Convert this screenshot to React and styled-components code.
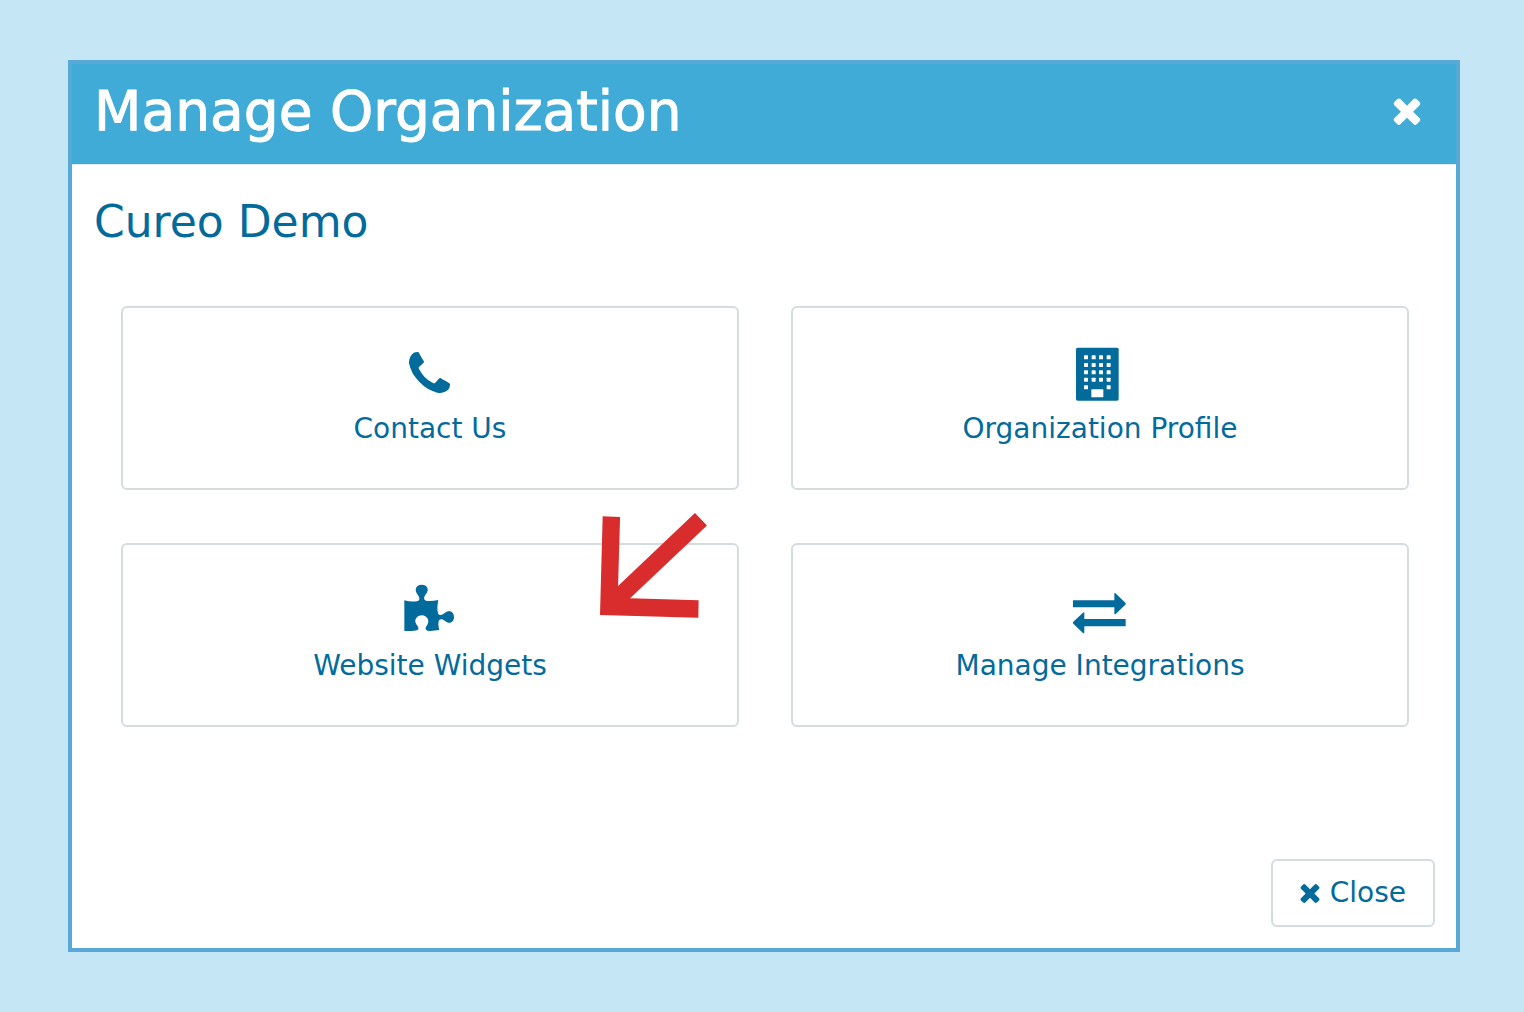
import React from "react";
import styled, { createGlobalStyle } from "styled-components";

const color = {
  page: "#c5e6f5",
  header: "#40abd6",
  frame: "#58a9d8",
  ink: "#036b9c",
  line: "#d3dce1",
  mark: "#d92c2c",
};

const GlobalStyle = createGlobalStyle`
  *, *::before, *::after { box-sizing: border-box; }
  body {
    margin: 0;
    background: ${color.page};
    color: ${color.ink};
    font-family: "DejaVu Sans", Verdana, sans-serif;
  }
  button { font: inherit; color: inherit; cursor: pointer; }
`;

const Page = styled.main`
  padding: 60px 64px 60px 68px;
`;

const Dialog = styled.section`
  border: 4px solid ${color.frame};
  background: #fff;
`;

const Header = styled.header`
  display: flex;
  align-items: center;
  justify-content: space-between;
  padding: 13px 35px 19px 22px;
  border-bottom: 1px solid #e3eaee;
  background: ${color.header};
  color: #fff;
`;

const Title = styled.h1`
  margin: 0;
  font-size: 55px;
  line-height: 68px;
  font-weight: 400;
  -webkit-text-stroke: 1px currentColor;
`;

const IconButton = styled.button`
  display: flex;
  padding: 0;
  border: 0;
  background: none;
`;

const Body = styled.div`
  padding: 27px 22px 0;
`;

const Subtitle = styled.h2`
  margin: 0;
  font-size: 44px;
  line-height: 60px;
  font-weight: 400;
`;

const Grid = styled.div`
  display: grid;
  grid-template-columns: 1fr 1fr;
  gap: 53px 52px;
  padding: 54px 25px 0 27px;
`;

const Card = styled.button`
  position: relative;
  display: flex;
  flex-direction: column;
  align-items: center;
  gap: 11px;
  padding: 39px 16px 42px;
  border: 2px solid ${color.line};
  border-radius: 6px;
  background: #fff;
  font-size: 28px;
  line-height: 34px;
`;

const Glyph = styled.svg`
  display: block;
  width: ${(p) => p.$size}px;
  height: ${(p) => p.$size}px;
  fill: currentColor;
`;

const Pointer = styled.svg`
  position: absolute;
  top: -32px;
  right: 30px;
  width: 107px;
  height: 105px;
  fill: ${color.mark};
  pointer-events: none;
`;

const Footer = styled.footer`
  display: flex;
  justify-content: flex-end;
  padding: 132px 21px 21px;
`;

const CloseButton = styled.button`
  display: flex;
  align-items: center;
  gap: 10px;
  padding: 15px 27px;
  border: 2px solid ${color.line};
  border-radius: 6px;
  background: #fff;
  font-size: 28px;
  line-height: 34px;
`;

const TimesIcon = ({ size }) => (
  <Glyph $size={size} viewBox="302 302 1188 1252" aria-hidden="true">
    <path d="M1490 1322q0 40-28 68l-136 136q-28 28-68 28t-68-28l-294-294-294 294q-28 28-68 28t-68-28l-136-136q-28-28-28-68t28-68l294-294-294-294q-28-28-28-68t28-68l136-136q28-28 68-28t68 28l294 294 294-294q28-28 68-28t68 28l136 136q28 28 28 68t-28 68l-294 294 294 294q28 28 28 68z" />
  </Glyph>
);

const PhoneIcon = () => (
  <Glyph $size={54} viewBox="-14 -44 1854 1854" aria-hidden="true">
    <path d="M1600 1240q0 27-10 70.500t-21 68.500q-21 50-122 106-94 51-186 51-27 0-53-3.500t-57.500-12.500-47-14.500-55.500-20.500-49-18q-98-35-175-83-127-79-264-216t-216-264q-48-77-83-175-3-9-18-49t-20.500-55.500-14.500-47-12.500-57.500-3.500-53q0-92 51-186 56-101 106-122 25-11 68.500-21t70.500-10q14 0 21 3 18 6 53 76 11 19 30 54t35 63.500 31 53.500q3 4 17.500 25t21.500 35.500 7 28.500q0 20-28.500 50t-62 55-62 53-28.500 46q0 9 5 22.500t8.500 20.500 14 24 11.500 19q76 137 174 235t235 174q2 1 19 11.500t24 14 20.500 8.500 22.500 5q18 0 46-28.500t53-62 55-62 50-28.500q14 0 28.500 7t35.500 21.500 25 17.500q25 15 53.500 31t63.500 35 54 30q70 35 76 53 3 7 3 21z" />
  </Glyph>
);

const windows = [67, 90, 112, 134, 157].flatMap((y, row) =>
  (row === 4 ? [78, 146] : [78, 101, 123, 146]).map((x) => [x, y])
);

const BuildingIcon = () => (
  <Glyph $size={54} viewBox="39 36 162 162" aria-hidden="true">
    <rect x="48" y="38" width="128" height="159" rx="5" />
    <g fill="#fff">
      {windows.map(([x, y]) => (
        <rect key={`${x}-${y}`} x={x - 6} y={y - 6} width="12" height="12" rx="2" />
      ))}
      <rect x="94" y="163" width="36" height="24" rx="2" />
    </g>
  </Glyph>
);

const PuzzleIcon = () => (
  <Glyph $size={54} viewBox="39 27 162 162" aria-hidden="true">
    <path d="M43 76C57 80 72 81 83 78C91 75 89 67 83 59C71 43 79 29 95 29C112 29 119 44 108 57C101 66 100 74 108 77C119 79 132 77 145 75C142 90 141 104 144 114C147 123 156 121 164 114C176 104 192 109 192 126C192 142 178 149 165 138C157 131 148 131 146 139C144 148 146 157 148 165C137 166 124 169 113 167C104 164 106 157 112 149C120 137 111 121 96 121C80 121 71 135 79 148C85 156 89 162 81 166C71 169 57 167 43 168Z" />
  </Glyph>
);

const ExchangeIcon = () => (
  <Glyph $size={54} viewBox="39 12 162 162" aria-hidden="true">
    <path d="M39 61H163V42Q163 36 168 41L196 68Q199 71 196 74L168 101Q163 106 163 99V82H39Z" />
    <path d="M197 117H73V100Q73 94 68 99L40 125Q37 128 40 131L68 158Q73 163 73 156V139H197Z" />
  </Glyph>
);

const actions = [
  { label: "Contact Us", Icon: PhoneIcon },
  { label: "Organization Profile", Icon: BuildingIcon },
  { label: "Website Widgets", Icon: PuzzleIcon, highlighted: true },
  { label: "Manage Integrations", Icon: ExchangeIcon },
];

export default function App() {
  return (
    <>
      <GlobalStyle />
      <Page>
        <Dialog role="dialog" aria-labelledby="dialog-title">
          <Header>
            <Title id="dialog-title">Manage Organization</Title>
            <IconButton type="button" aria-label="Close dialog">
              <TimesIcon size={28} />
            </IconButton>
          </Header>
          <Body>
            <Subtitle>Cureo Demo</Subtitle>
            <Grid>
              {actions.map(({ label, Icon, highlighted }) => (
                <Card key={label} type="button">
                  <Icon />
                  <span>{label}</span>
                  {highlighted && (
                    <Pointer viewBox="32 39 320 314" aria-hidden="true">
                      <path d="M40 49L92 51L86 257L316 39L352 76L122 294L327 300L326 352L32 344Z" />
                    </Pointer>
                  )}
                </Card>
              ))}
            </Grid>
          </Body>
          <Footer>
            <CloseButton type="button">
              <TimesIcon size={20} />
              Close
            </CloseButton>
          </Footer>
        </Dialog>
      </Page>
    </>
  );
}
